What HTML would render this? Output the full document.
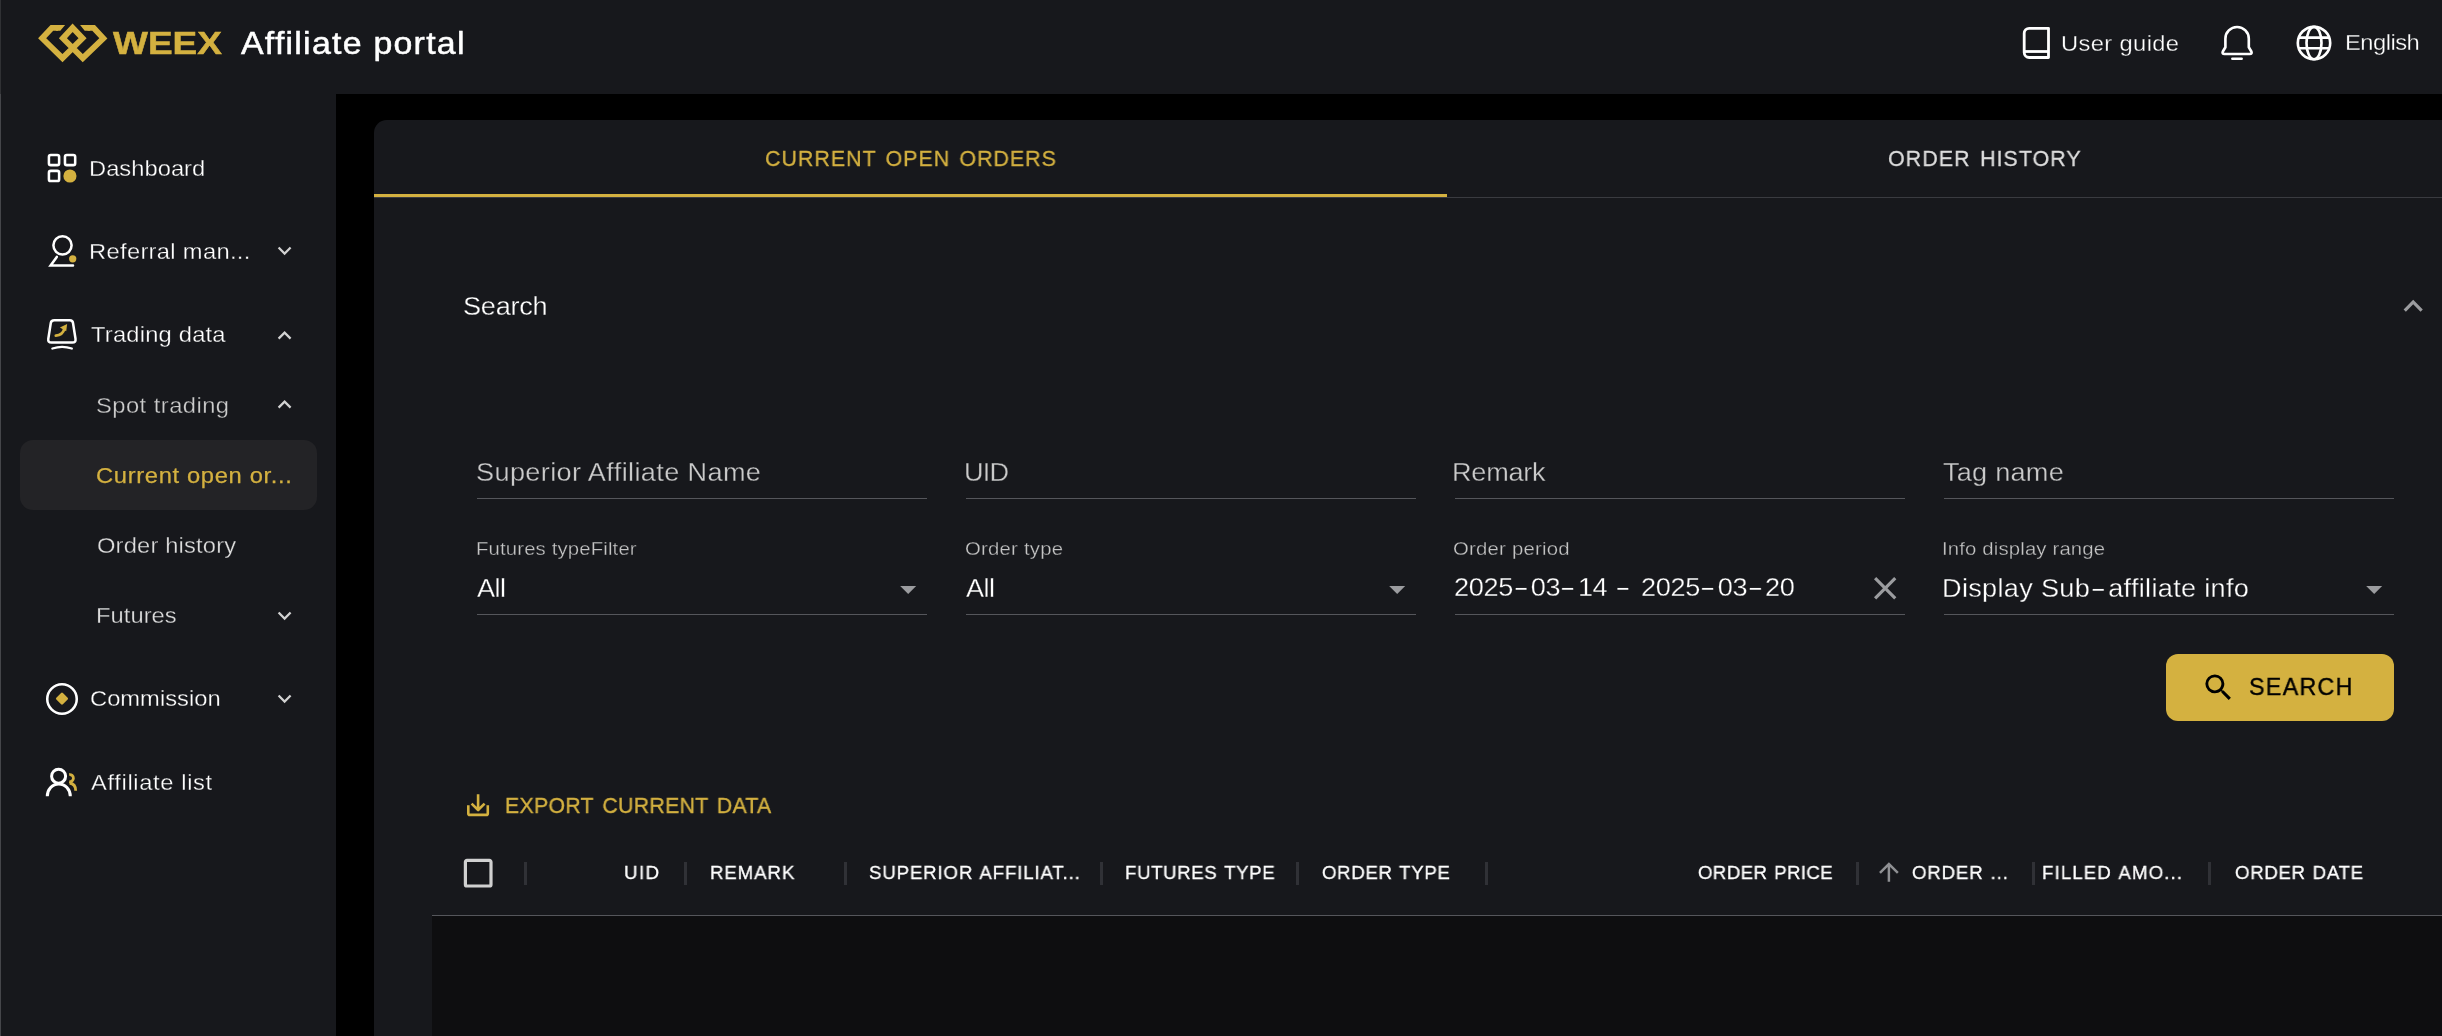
<!DOCTYPE html>
<html lang="en"><head><meta charset="utf-8"><title>WEEX Affiliate portal</title>
<style>
html,body{margin:0;padding:0;background:#000;}
body{width:2442px;height:1036px;overflow:hidden;position:relative;font-family:"Liberation Sans",sans-serif;}
.t{position:absolute;white-space:pre;margin:0;will-change:transform;}
.a{position:absolute;display:block;}
.hy{display:inline-block;text-align:center;letter-spacing:0;}
.hy span{display:inline-block;position:relative;left:-1px;}
#hdr{position:absolute;left:0;top:0;width:2442px;height:94px;background:#17181c;}
#side{position:absolute;left:0;top:94px;width:336px;height:942px;background:#17181c;}
#edge1{position:absolute;left:0;top:0;width:1px;height:94px;background:#303134;}
#edge2{position:absolute;left:0;top:94px;width:1px;height:942px;background:#45464a;}
#card{position:absolute;left:374px;top:120px;width:2146px;height:920px;background:#17181c;border-radius:12.8px 0 0 0;}
#act{position:absolute;left:20px;top:440px;width:297.3px;height:70px;border-radius:13px;background:#232326;}
</style></head>
<body>
<header>
<div id="hdr"></div><div id="edge1"></div>
<svg class="a" style="left:30px;top:16px" width="90" height="56" viewBox="30 16 90 56">
<path d="M58 27.9H51.8L42.15 38.27L62.5 58.1L82.55 38.27L72.6 27.85L62.9 38.27L82.75 58.1L103.35 38.27L93.7 27.9H87.5" fill="none" stroke="#d4b140" stroke-width="5.8" stroke-linejoin="miter" stroke-miterlimit="10"/>
<path d="M56 25H65.1L60.3 30.8H56ZM80.1 25H90V30.8H84.7Z" fill="#d4b140"/>
</svg>
<div class="t" style="left:112.57px;top:21.81px;font-size:32px;line-height:42px;color:#d4b140;letter-spacing:0.000px;font-weight:700;-webkit-text-stroke:0.5px #d4b140;transform:scaleX(1.155);transform-origin:0 0;">WEEX</div>
<div class="t" style="left:241.23px;top:21.91px;font-size:32px;line-height:42px;color:#ffffff;letter-spacing:1.166px;-webkit-text-stroke:0.5px #ffffff;transform:scaleX(1.06);transform-origin:0 0;">Affiliate portal</div>
<svg class="a" style="left:2018px;top:22px" width="40" height="42" viewBox="2018 22 40 42">
<g fill="none" stroke="#fff" stroke-width="2.8" stroke-linejoin="round">
<path d="M2048.5 28.3H2029.2a5 5 0 0 0-5 5V52.5a5 5 0 0 0 5 5H2048.5Z"/>
<path d="M2024.5 51.5H2048.5"/>
</g></svg>
<div class="t" style="left:2061.37px;top:28.74px;font-size:22.4px;line-height:29px;color:#ffffff;letter-spacing:0.342px;-webkit-text-stroke:0.3px #17181c;transform:scaleX(1.06);transform-origin:0 0;">User guide</div>
<svg class="a" style="left:2214px;top:20px" width="46" height="46" viewBox="2214 20 46 46">
<g fill="none" stroke="#fff" stroke-width="2.65" stroke-linecap="round" stroke-linejoin="round">
<path d="M2225.4 47.2V38.7a11.7 11.7 0 0 1 23.4 0V47.2L2251.2 51.2Q2252.6 53.95 2249.6 53.95H2224.6Q2221.6 53.95 2223 51.2Z"/>
<path d="M2232.3 58.8H2241.7" stroke-width="2.4"/>
</g></svg>
<svg class="a" style="left:2290px;top:20px" width="48" height="48" viewBox="2290 20 48 48">
<g fill="none" stroke="#fff" stroke-width="2.65">
<circle cx="2314" cy="43" r="16.2"/>
<ellipse cx="2314" cy="43" rx="7.5" ry="16.2"/>
<path d="M2299 37.55H2329M2299 48.2H2329"/>
</g></svg>
<div class="t" style="left:2344.75px;top:28.14px;font-size:22.4px;line-height:29px;color:#ffffff;letter-spacing:-0.485px;-webkit-text-stroke:0.3px #17181c;transform:scaleX(1.06);transform-origin:0 0;">English</div>
</header>
<nav>
<div id="side"></div><div id="edge2"></div>
<div id="act"></div>
<svg class="a" style="left:44px;top:150px" width="36" height="36" viewBox="44 150 36 36">
<g fill="none" stroke="#fff" stroke-width="2.55">
<rect x="48.92" y="154.92" width="10.2" height="10.2" rx="1.9"/>
<rect x="64.97" y="154.92" width="10.2" height="10.2" rx="1.9"/>
<rect x="48.92" y="170.87" width="10.2" height="10.2" rx="1.9"/>
</g><circle cx="69.95" cy="176" r="6.55" fill="#d4b140"/></svg>
<div class="t" style="left:89.35px;top:153.64px;font-size:22.4px;line-height:29px;color:#ffffff;letter-spacing:0.014px;-webkit-text-stroke:0.3px #17181c;transform:scaleX(1.06);transform-origin:0 0;">Dashboard</div>
<svg class="a" style="left:44px;top:230px" width="36" height="42" viewBox="44 230 36 42">
<g fill="none" stroke="#fff" stroke-width="2.55" stroke-linejoin="miter" stroke-linecap="round">
<circle cx="62.5" cy="245.35" r="9.1"/>
<path d="M56.8 256.9L50.6 265.5H73"/>
</g><circle cx="72.7" cy="258.85" r="3.65" fill="#d4b140"/></svg>
<div class="t" style="left:89.35px;top:236.74px;font-size:22.4px;line-height:29px;color:#ffffff;letter-spacing:0.296px;-webkit-text-stroke:0.3px #17181c;transform:scaleX(1.06);transform-origin:0 0;">Referral man...</div>
<svg class="a" style="left:271.20px;top:237.12px" width="27.2" height="27.2" viewBox="0 0 24 24"><path d="M7.41,8.58L12,13.17L16.59,8.58L18,10L12,16L6,10L7.41,8.58Z" fill="#d2d2d2"/></svg>
<svg class="a" style="left:42px;top:314px" width="40" height="40" viewBox="42 314 40 40">
<g fill="none" stroke="#fff" stroke-width="2.5" stroke-linejoin="round" stroke-linecap="round">
<path d="M54.3 320.3H69.9Q72.6 320.3 73 323L75.5 338.8Q76.1 342.6 72.3 342.6H51.5Q47.7 342.6 48.3 338.8L50.8 323Q51.2 320.3 54.3 320.3Z"/>
<path d="M52.4 348.5Q62.1 345.1 71.8 348.5" stroke-width="2.3"/>
</g>
<path d="M55.8 335.7Q62.8 335 64.4 328.6" fill="none" stroke="#d4b140" stroke-width="2.7" stroke-linecap="round"/>
<path d="M67.1 324L59.9 327.5L66.2 331.2Z" fill="#d4b140"/>
</svg>
<div class="t" style="left:90.77px;top:319.74px;font-size:22.4px;line-height:29px;color:#ffffff;letter-spacing:0.188px;-webkit-text-stroke:0.3px #17181c;transform:scaleX(1.06);transform-origin:0 0;">Trading data</div>
<svg class="a" style="left:271.20px;top:321.78px" width="27.2" height="27.2" viewBox="0 0 24 24"><path d="M7.41,15.41L12,10.83L16.59,15.41L18,14L12,8L6,14L7.41,15.41Z" fill="#d2d2d2"/></svg>
<div class="t" style="left:96.42px;top:390.84px;font-size:22.4px;line-height:29px;color:#cccccc;letter-spacing:0.435px;-webkit-text-stroke:0.3px #17181c;transform:scaleX(1.06);transform-origin:0 0;">Spot trading</div>
<svg class="a" style="left:271.20px;top:391.28px" width="27.2" height="27.2" viewBox="0 0 24 24"><path d="M7.41,15.41L12,10.83L16.59,15.41L18,14L12,8L6,14L7.41,15.41Z" fill="#d2d2d2"/></svg>
<div class="t" style="left:96.49px;top:460.94px;font-size:22.4px;line-height:29px;color:#d4b140;letter-spacing:0.621px;-webkit-text-stroke:0.25px #d4b140;transform:scaleX(1.06);transform-origin:0 0;">Current open or...</div>
<div class="t" style="left:96.58px;top:531.04px;font-size:22.4px;line-height:29px;color:#dddddd;letter-spacing:0.153px;-webkit-text-stroke:0.3px #17181c;transform:scaleX(1.06);transform-origin:0 0;">Order history</div>
<div class="t" style="left:95.75px;top:600.94px;font-size:22.4px;line-height:29px;color:#dddddd;letter-spacing:0.033px;-webkit-text-stroke:0.3px #17181c;transform:scaleX(1.06);transform-origin:0 0;">Futures</div>
<svg class="a" style="left:271.20px;top:601.97px" width="27.2" height="27.2" viewBox="0 0 24 24"><path d="M7.41,8.58L12,13.17L16.59,8.58L18,10L12,16L6,10L7.41,8.58Z" fill="#d2d2d2"/></svg>
<svg class="a" style="left:42px;top:679px" width="40" height="40" viewBox="42 679 40 40">
<circle cx="62" cy="699" r="14.75" fill="none" stroke="#fff" stroke-width="2.55"/>
<rect x="57.35" y="693.9" width="9.3" height="9.3" rx="1.3" transform="rotate(45 62 698.55)" fill="#d4b140"/></svg>
<div class="t" style="left:90.09px;top:684.44px;font-size:22.4px;line-height:29px;color:#ffffff;letter-spacing:0.003px;-webkit-text-stroke:0.3px #17181c;transform:scaleX(1.06);transform-origin:0 0;">Commission</div>
<svg class="a" style="left:271.20px;top:685.32px" width="27.2" height="27.2" viewBox="0 0 24 24"><path d="M7.41,8.58L12,13.17L16.59,8.58L18,10L12,16L6,10L7.41,8.58Z" fill="#d2d2d2"/></svg>
<svg class="a" style="left:42px;top:764px" width="40" height="36" viewBox="42 764 40 36">
<g fill="none" stroke="#fff" stroke-width="3" stroke-linecap="butt">
<circle cx="58.6" cy="776.15" r="7"/>
<path d="M47.3 796.3A11.5 12.4 0 0 1 70.3 796.3"/>
</g>
<g fill="none" stroke="#d4b140" stroke-width="2.8" stroke-linecap="butt">
<path d="M69.2 774.6A3.6 3.6 0 1 1 69.2 781.7"/>
<path d="M69.6 783Q75.7 784 75.7 790.7"/>
</g></svg>
<div class="t" style="left:91.25px;top:767.94px;font-size:22.4px;line-height:29px;color:#ffffff;letter-spacing:0.593px;-webkit-text-stroke:0.3px #17181c;transform:scaleX(1.06);transform-origin:0 0;">Affiliate list</div>
</nav>
<main>
<div id="card"></div>
<div class="a" style="left:374px;top:196.5px;width:2146px;height:1.2px;background:#3a3b40"></div>
<div class="a" style="left:374px;top:193.8px;width:1073px;height:3.4px;background:#d4b140"></div>
<div class="t" style="left:765.41px;top:143.20px;font-size:22.8px;line-height:30px;color:#d4b140;letter-spacing:1.019px;word-spacing:2.66px;-webkit-text-stroke:0.3px #d4b140;transform:scaleX(0.94);transform-origin:0 0;">CURRENT OPEN ORDERS</div>
<div class="t" style="left:1887.78px;top:143.20px;font-size:22.8px;line-height:30px;color:#dddddd;letter-spacing:1.094px;word-spacing:2.66px;-webkit-text-stroke:0.3px #dddddd;transform:scaleX(0.94);transform-origin:0 0;">ORDER HISTORY</div>
<div class="t" style="left:463.37px;top:289.73px;font-size:25.6px;line-height:33px;color:#ffffff;letter-spacing:-0.243px;-webkit-text-stroke:0.3px #17181c;transform:scaleX(1.06);transform-origin:0 0;">Search</div>
<svg class="a" style="left:2394.05px;top:287.12px" width="38.4" height="38.4" viewBox="0 0 24 24"><path d="M7.41,15.41L12,10.83L16.59,15.41L18,14L12,8L6,14L7.41,15.41Z" fill="#9b9c9f"/></svg>
<div class="a" style="left:477px;top:497.8px;width:450px;height:1.3px;background:#55565b"></div>
<div class="a" style="left:477px;top:613.7px;width:450px;height:1.3px;background:#55565b"></div>
<div class="a" style="left:966px;top:497.8px;width:450px;height:1.3px;background:#55565b"></div>
<div class="a" style="left:966px;top:613.7px;width:450px;height:1.3px;background:#55565b"></div>
<div class="a" style="left:1454.5px;top:497.8px;width:450.5px;height:1.3px;background:#55565b"></div>
<div class="a" style="left:1454.5px;top:613.7px;width:450.5px;height:1.3px;background:#55565b"></div>
<div class="a" style="left:1943.5px;top:497.8px;width:450.5px;height:1.3px;background:#55565b"></div>
<div class="a" style="left:1943.5px;top:613.7px;width:450.5px;height:1.3px;background:#55565b"></div>
<div class="t" style="left:476.17px;top:455.63px;font-size:25.6px;line-height:33px;color:#cacaca;letter-spacing:0.343px;-webkit-text-stroke:0.3px #17181c;transform:scaleX(1.06);transform-origin:0 0;">Superior Affiliate Name</div>
<div class="t" style="left:964.11px;top:455.63px;font-size:25.6px;line-height:33px;color:#cacaca;letter-spacing:-0.727px;-webkit-text-stroke:0.3px #17181c;transform:scaleX(1.06);transform-origin:0 0;">UID</div>
<div class="t" style="left:1452.17px;top:455.63px;font-size:25.6px;line-height:33px;color:#cacaca;letter-spacing:-0.246px;-webkit-text-stroke:0.3px #17181c;transform:scaleX(1.06);transform-origin:0 0;">Remark</div>
<div class="t" style="left:1943.29px;top:455.63px;font-size:25.6px;line-height:33px;color:#cacaca;letter-spacing:0.222px;-webkit-text-stroke:0.3px #17181c;transform:scaleX(1.06);transform-origin:0 0;">Tag name</div>
<div class="t" style="left:475.73px;top:536.15px;font-size:19.2px;line-height:25px;color:#c4c4c4;letter-spacing:0.131px;-webkit-text-stroke:0.3px #17181c;transform:scaleX(1.06);transform-origin:0 0;">Futures typeFilter</div>
<div class="t" style="left:965.24px;top:536.15px;font-size:19.2px;line-height:25px;color:#c4c4c4;letter-spacing:0.202px;-webkit-text-stroke:0.3px #17181c;transform:scaleX(1.06);transform-origin:0 0;">Order type</div>
<div class="t" style="left:1453.44px;top:536.15px;font-size:19.2px;line-height:25px;color:#c4c4c4;letter-spacing:0.208px;-webkit-text-stroke:0.3px #17181c;transform:scaleX(1.06);transform-origin:0 0;">Order period</div>
<div class="t" style="left:1942.02px;top:536.15px;font-size:19.2px;line-height:25px;color:#c4c4c4;letter-spacing:0.140px;-webkit-text-stroke:0.3px #17181c;transform:scaleX(1.06);transform-origin:0 0;">Info display range</div>
<div class="t" style="left:477.35px;top:571.73px;font-size:25.6px;line-height:33px;color:#ffffff;letter-spacing:-0.514px;-webkit-text-stroke:0.3px #17181c;transform:scaleX(1.06);transform-origin:0 0;">All</div>
<div class="t" style="left:966.15px;top:571.73px;font-size:25.6px;line-height:33px;color:#ffffff;letter-spacing:-0.514px;-webkit-text-stroke:0.3px #17181c;transform:scaleX(1.06);transform-origin:0 0;">All</div>
<div class="t" style="left:1453.94px;top:571.03px;font-size:25.6px;line-height:33px;color:#ffffff;letter-spacing:-0.351px;word-spacing:0.75px;-webkit-text-stroke:0.3px #17181c;transform:scaleX(1.06);transform-origin:0 0;">2025<span class="hy" style="width:16.79px"><span style="transform:scaleX(1.74)">-</span></span>03<span class="hy" style="width:16.79px"><span style="transform:scaleX(1.74)">-</span></span>14 <span class="hy" style="width:16.79px"><span style="transform:scaleX(1.74)">-</span></span> 2025<span class="hy" style="width:16.79px"><span style="transform:scaleX(1.74)">-</span></span>03<span class="hy" style="width:16.79px"><span style="transform:scaleX(1.74)">-</span></span>20</div>
<div class="t" style="left:1941.67px;top:571.73px;font-size:25.6px;line-height:33px;color:#ffffff;letter-spacing:0.290px;-webkit-text-stroke:0.3px #17181c;transform:scaleX(1.06);transform-origin:0 0;">Display Sub<span class="hy" style="width:16.98px"><span style="transform:scaleX(1.76)">-</span></span>affiliate info</div>
<svg class="a" style="left:889.00px;top:569.80px" width="38.4" height="38.4" viewBox="0 0 24 24"><path d="M7,10L12,15L17,10H7Z" fill="#9b9c9f"/></svg>
<svg class="a" style="left:1377.80px;top:569.80px" width="38.4" height="38.4" viewBox="0 0 24 24"><path d="M7,10L12,15L17,10H7Z" fill="#9b9c9f"/></svg>
<svg class="a" style="left:2355.30px;top:569.80px" width="38.4" height="38.4" viewBox="0 0 24 24"><path d="M7,10L12,15L17,10H7Z" fill="#9b9c9f"/></svg>
<svg class="a" style="left:1865.95px;top:568.95px" width="38.4" height="38.4" viewBox="0 0 24 24"><path d="M19,6.41L17.59,5L12,10.59L6.41,5L5,6.41L10.59,12L5,17.59L6.41,19L12,13.41L17.59,19L19,17.59L13.41,12L19,6.41Z" fill="#9b9c9f"/></svg>
<div class="a" style="left:2166px;top:654px;width:228px;height:67px;border-radius:12px;background:#d4b140"></div>
<svg class="a" style="left:2200.70px;top:669.80px" width="35" height="35" viewBox="0 0 24 24"><path d="M9.5,3A6.5,6.5 0 0,1 16,9.5C16,11.11 15.41,12.59 14.44,13.73L14.71,14H15.5L20.5,19L19,20.5L14,15.5V14.71L13.73,14.44C12.59,15.41 11.11,16 9.5,16A6.5,6.5 0 0,1 3,9.5A6.5,6.5 0 0,1 9.5,3M9.5,5C7,5 5,7 5,9.5C5,12 7,14 9.5,14C12,14 14,12 14,9.5C14,7 12,5 9.5,5Z" fill="#000"/></svg>
<div class="t" style="left:2248.94px;top:670.98px;font-size:24px;line-height:31px;color:#000000;letter-spacing:1.306px;-webkit-text-stroke:0.4px #000000;transform:scaleX(0.97);transform-origin:0 0;">SEARCH</div>
<svg class="a" style="left:462px;top:790px" width="32" height="32" viewBox="462 790 32 32">
<g fill="none" stroke="#d4b140" stroke-width="2.6" stroke-linejoin="round">
<path d="M468.3 805.2V813.4Q468.3 814.9 469.8 814.9H486.3Q487.8 814.9 487.8 813.4V805.2"/>
<path d="M478.1 794.2V809.4M471.6 803.6L478.1 810L484.6 803.6"/>
</g></svg>
<div class="t" style="left:504.55px;top:791.14px;font-size:22.4px;line-height:29px;color:#d4b140;letter-spacing:0.327px;word-spacing:2.63px;-webkit-text-stroke:0.35px #d4b140;transform:scaleX(0.95);transform-origin:0 0;">EXPORT CURRENT DATA</div>
<div class="a" style="left:432px;top:916px;width:2100px;height:130px;background:#0e0e10"></div>
<div class="a" style="left:432px;top:914.8px;width:2100px;height:1.3px;background:#55565b"></div>
<svg class="a" style="left:459.00px;top:854.00px" width="38.4" height="38.4" viewBox="0 0 24 24"><path d="M19,3H5C3.89,3 3,3.89 3,5V19A2,2 0 0,0 5,21H19A2,2 0 0,0 21,19V5C21,3.89 20.1,3 19,3M19,5V19H5V5H19Z" fill="#d0d0d0"/></svg>
<div class="a" style="left:523.6999999999999px;top:862px;width:3.2px;height:22.6px;background:#303136"></div>
<div class="a" style="left:683.6px;top:862px;width:3.2px;height:22.6px;background:#303136"></div>
<div class="a" style="left:843.6px;top:862px;width:3.2px;height:22.6px;background:#303136"></div>
<div class="a" style="left:1099.7px;top:862px;width:3.2px;height:22.6px;background:#303136"></div>
<div class="a" style="left:1295.6000000000001px;top:862px;width:3.2px;height:22.6px;background:#303136"></div>
<div class="a" style="left:1484.5px;top:862px;width:3.2px;height:22.6px;background:#303136"></div>
<div class="a" style="left:1855.8000000000002px;top:862px;width:3.2px;height:22.6px;background:#303136"></div>
<div class="a" style="left:2031.6000000000001px;top:862px;width:3.2px;height:22.6px;background:#303136"></div>
<div class="a" style="left:2207.8px;top:862px;width:3.2px;height:22.6px;background:#303136"></div>
<div class="t" style="left:624.46px;top:859.75px;font-size:19.2px;line-height:25px;color:#ffffff;letter-spacing:1.574px;word-spacing:1.24px;-webkit-text-stroke:0.3px #ffffff;transform:scaleX(0.97);transform-origin:0 0;">UID</div>
<div class="t" style="left:709.57px;top:859.75px;font-size:19.2px;line-height:25px;color:#ffffff;letter-spacing:0.981px;word-spacing:1.24px;-webkit-text-stroke:0.3px #ffffff;transform:scaleX(0.97);transform-origin:0 0;">REMARK</div>
<div class="t" style="left:869.45px;top:859.75px;font-size:19.2px;line-height:25px;color:#ffffff;letter-spacing:0.899px;word-spacing:1.24px;-webkit-text-stroke:0.3px #ffffff;transform:scaleX(0.97);transform-origin:0 0;">SUPERIOR AFFILIAT...</div>
<div class="t" style="left:1125.27px;top:859.75px;font-size:19.2px;line-height:25px;color:#ffffff;letter-spacing:0.665px;word-spacing:1.24px;-webkit-text-stroke:0.3px #ffffff;transform:scaleX(0.97);transform-origin:0 0;">FUTURES TYPE</div>
<div class="t" style="left:1322.22px;top:859.75px;font-size:19.2px;line-height:25px;color:#ffffff;letter-spacing:0.681px;word-spacing:1.24px;-webkit-text-stroke:0.3px #ffffff;transform:scaleX(0.97);transform-origin:0 0;">ORDER TYPE</div>
<div class="t" style="left:1697.52px;top:859.75px;font-size:19.2px;line-height:25px;color:#ffffff;letter-spacing:0.436px;word-spacing:1.24px;-webkit-text-stroke:0.3px #ffffff;transform:scaleX(0.97);transform-origin:0 0;">ORDER PRICE</div>
<div class="t" style="left:1911.82px;top:859.75px;font-size:19.2px;line-height:25px;color:#ffffff;letter-spacing:0.867px;word-spacing:1.24px;-webkit-text-stroke:0.3px #ffffff;transform:scaleX(0.97);transform-origin:0 0;">ORDER ...</div>
<div class="t" style="left:2042.17px;top:859.75px;font-size:19.2px;line-height:25px;color:#ffffff;letter-spacing:1.177px;word-spacing:1.24px;-webkit-text-stroke:0.3px #ffffff;transform:scaleX(0.97);transform-origin:0 0;">FILLED AMO...</div>
<div class="t" style="left:2234.52px;top:859.75px;font-size:19.2px;line-height:25px;color:#ffffff;letter-spacing:0.706px;word-spacing:1.24px;-webkit-text-stroke:0.3px #ffffff;transform:scaleX(0.97);transform-origin:0 0;">ORDER DATE</div>
<svg class="a" style="left:1874.45px;top:857.35px" width="29.8" height="29.8" viewBox="0 0 24 24"><path d="M13,20H11V8L5.5,13.5L4.08,12.08L12,4.16L19.92,12.08L18.5,13.5L13,8V20Z" fill="#8f9093"/></svg>
</main>
</body></html>
